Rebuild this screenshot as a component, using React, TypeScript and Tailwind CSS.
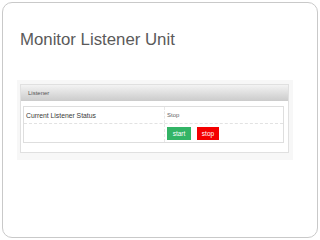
export default function App() {
  return (
    <div className="w-[320px] h-[240px] bg-white p-[2px] font-['Liberation_Sans',Arial,sans-serif]">
      <div className="h-full rounded-[10px] border border-[#c9c9c9] pt-[27px] pl-[14px]">
        <h1 className="ml-[3px] text-[16.8px] leading-[20px] text-[#5a5a5a]">Monitor Listener Unit</h1>

        <div className="mt-[30px] w-[276px] h-[80px] bg-[#f7f7f7] pt-[4px] pl-[3px]">
          <div className="w-[269px] h-[69px] bg-white border border-[#e0e0e0]">
            <div className="h-[16px] bg-gradient-to-b from-[#f3f3f3] to-[#cbcbcb] pl-[7px] text-[6px] leading-[16px] text-[#555]">
              Listener
            </div>
            <div className="mt-[5px] ml-[2px] w-[261px] border border-[#dedede] text-[6.8px] text-[#3a3a3a]">
              <div className="flex h-[17px] border-b border-dashed border-[#e2e2e2]">
                <div className="w-[141px] pl-[2px] leading-[17px] border-r border-dashed border-[#e8e8e8]">
                  Current Listener Status
                </div>
                <div className="pl-[2px] leading-[17px] text-[#666] text-[6px]">Stop</div>
              </div>
              <div className="flex h-[18px]">
                <div className="w-[141px] border-r border-dashed border-[#e8e8e8]" />
                <div className="flex items-center gap-[6px] pl-[2px]">
                  <span className="w-[24px] h-[13px] bg-[#33b466] text-white text-[6.5px] leading-[13px] text-center">start</span>
                  <span className="w-[22px] h-[13px] bg-[#f40000] text-white text-[6.5px] leading-[13px] text-center">stop</span>
                </div>
              </div>
            </div>
          </div>
        </div>
      </div>
    </div>
  );
}
